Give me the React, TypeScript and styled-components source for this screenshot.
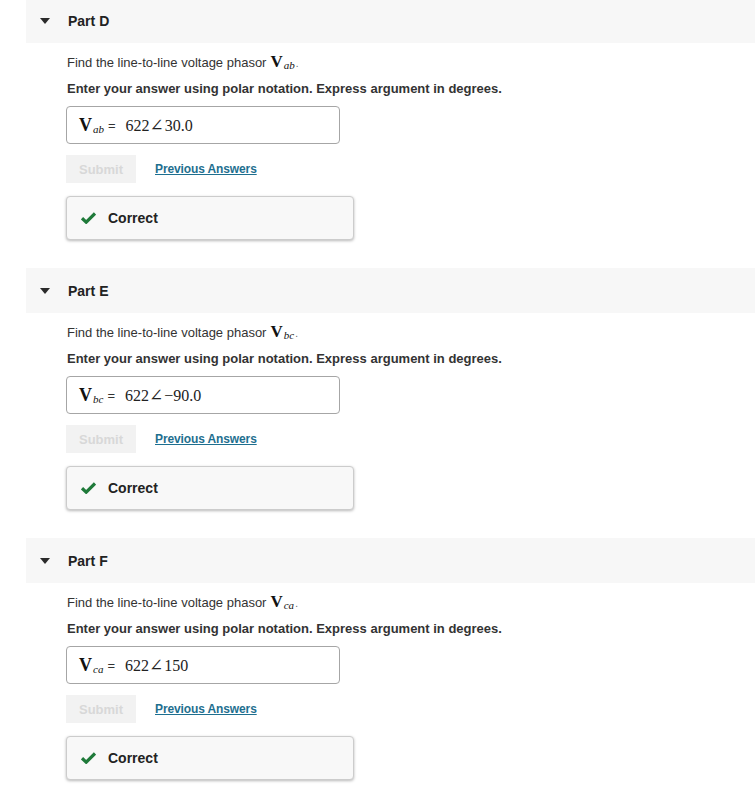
import React from "react";
import styled, { createGlobalStyle } from "styled-components";

const GlobalStyle = createGlobalStyle`
  html, body { margin: 0; padding: 0; background: #ffffff; }
  body { font-family: "Liberation Sans", Arial, sans-serif; color: #222222; }
`;

const Page = styled.div`
  padding-left: 26px;
  margin-top: -2px;
`;

const Section = styled.section`
  display: flex;
  flex-direction: column;
`;

const Header = styled.div`
  height: 45px;
  background: #f7f7f7;
  display: flex;
  align-items: center;
  padding-left: 14px;
  gap: 18px;
`;

const Title = styled.span`
  font-size: 14px;
  font-weight: bold;
  color: #222222;
`;

const Body = styled.div`
  display: flex;
  flex-direction: column;
  align-items: flex-start;
  padding: 10px 0 28px 40px;
`;

const Prompt = styled.div`
  height: 18px;
  display: flex;
  align-items: center;
  font-size: 13px;
  color: #333333;
  padding-left: 1px;
`;

const Instruction = styled.div`
  height: 18px;
  margin-top: 8px;
  display: flex;
  align-items: center;
  font-size: 13px;
  font-weight: bold;
  color: #333333;
  padding-left: 1px;
`;

const MathVar = styled.span`
  font-family: "Liberation Serif", "DejaVu Serif", serif;
  font-weight: bold;
  font-size: 17px;
  color: #111111;
  margin-left: 4px;
`;

const Sub = styled.sub`
  font-family: "Liberation Serif", "DejaVu Serif", serif;
  font-style: italic;
  font-weight: normal;
  font-size: 11px;
  vertical-align: -2px;
  line-height: 0;
  margin-left: 1px;
`;

const Dot = styled.span`
  font-size: 10px;
  color: #666666;
  margin-left: 1px;
  align-self: flex-end;
  padding-bottom: 2px;
`;

const AnswerBox = styled.div`
  margin-top: 9px;
  box-sizing: border-box;
  width: 274px;
  height: 38px;
  border: 1px solid #a6a6a6;
  border-radius: 4px;
  display: flex;
  align-items: center;
  padding-left: 12px;
  background: #ffffff;
`;

const BoxVar = styled.span`
  font-family: "Liberation Serif", "DejaVu Serif", serif;
  font-weight: bold;
  font-size: 18px;
  color: #111111;
`;

const Equals = styled.span`
  font-size: 13px;
  color: #333333;
  margin-left: 4px;
  margin-right: 10px;
`;

const Value = styled.span`
  font-family: "Liberation Serif", "DejaVu Serif", serif;
  font-size: 16px;
  color: #222222;
  display: inline-flex;
  align-items: baseline;
`;

const Angle = styled.span`
  font-family: "DejaVu Serif", "Liberation Serif", serif;
  font-size: 17px;
  margin: 0 1px 0 0;
`;

const Actions = styled.div`
  margin-top: 11px;
  display: flex;
  align-items: center;
  gap: 19px;
`;

const SubmitButton = styled.button`
  width: 70px;
  height: 28px;
  border: none;
  border-radius: 0;
  background: #f2f2f2;
  color: #d8d8d8;
  font-family: "Liberation Sans", Arial, sans-serif;
  font-size: 13px;
  font-weight: bold;
  padding: 0;
  cursor: default;
`;

const PrevLink = styled.a`
  font-size: 12px;
  font-weight: bold;
  color: #1e6f8f;
  text-decoration: underline;
  letter-spacing: -0.12px;
  cursor: pointer;
`;

const Feedback = styled.div`
  margin-top: 13px;
  box-sizing: border-box;
  width: 288px;
  height: 44px;
  border: 1px solid #cccccc;
  border-radius: 4px;
  background: #f8f8f8;
  box-shadow: 0 1px 3px rgba(0, 0, 0, 0.28);
  display: flex;
  align-items: center;
  padding-left: 14px;
  gap: 12px;
`;

const FeedbackText = styled.span`
  font-size: 14px;
  font-weight: bold;
  color: #222222;
`;

const Caret = () => (
  <svg width="10" height="6" viewBox="0 0 10 6">
    <polygon points="0,0 10,0 5,6" fill="#2b2b2b" />
  </svg>
);

const Check = () => (
  <svg width="15" height="12" viewBox="0 0 15 12">
    <path d="M1 6.2 L5.2 10.2 L14 1.5" fill="none" stroke="#1f7a3a" strokeWidth="3.2" strokeLinejoin="miter" />
  </svg>
);

type PartProps = {
  name: string;
  sub: string;
  magnitude: string;
  angle: string;
};

const Part: React.FC<PartProps> = ({ name, sub, magnitude, angle }) => (
  <Section>
    <Header>
      <Caret />
      <Title>Part {name}</Title>
    </Header>
    <Body>
      <Prompt>
        Find the line-to-line voltage phasor
        <MathVar>
          V<Sub>{sub}</Sub>
        </MathVar>
        <Dot>.</Dot>
      </Prompt>
      <Instruction>Enter your answer using polar notation. Express argument in degrees.</Instruction>
      <AnswerBox>
        <BoxVar>
          V<Sub>{sub}</Sub>
        </BoxVar>
        <Equals>=</Equals>
        <Value>
          {magnitude}
          <Angle>∠</Angle>
          {angle}
        </Value>
      </AnswerBox>
      <Actions>
        <SubmitButton disabled>Submit</SubmitButton>
        <PrevLink>Previous Answers</PrevLink>
      </Actions>
      <Feedback>
        <Check />
        <FeedbackText>Correct</FeedbackText>
      </Feedback>
    </Body>
  </Section>
);

export default function App() {
  return (
    <>
      <GlobalStyle />
      <Page>
        <Part name="D" sub="ab" magnitude="622" angle="30.0" />
        <Part name="E" sub="bc" magnitude="622" angle="−90.0" />
        <Part name="F" sub="ca" magnitude="622" angle="150" />
      </Page>
    </>
  );
}
